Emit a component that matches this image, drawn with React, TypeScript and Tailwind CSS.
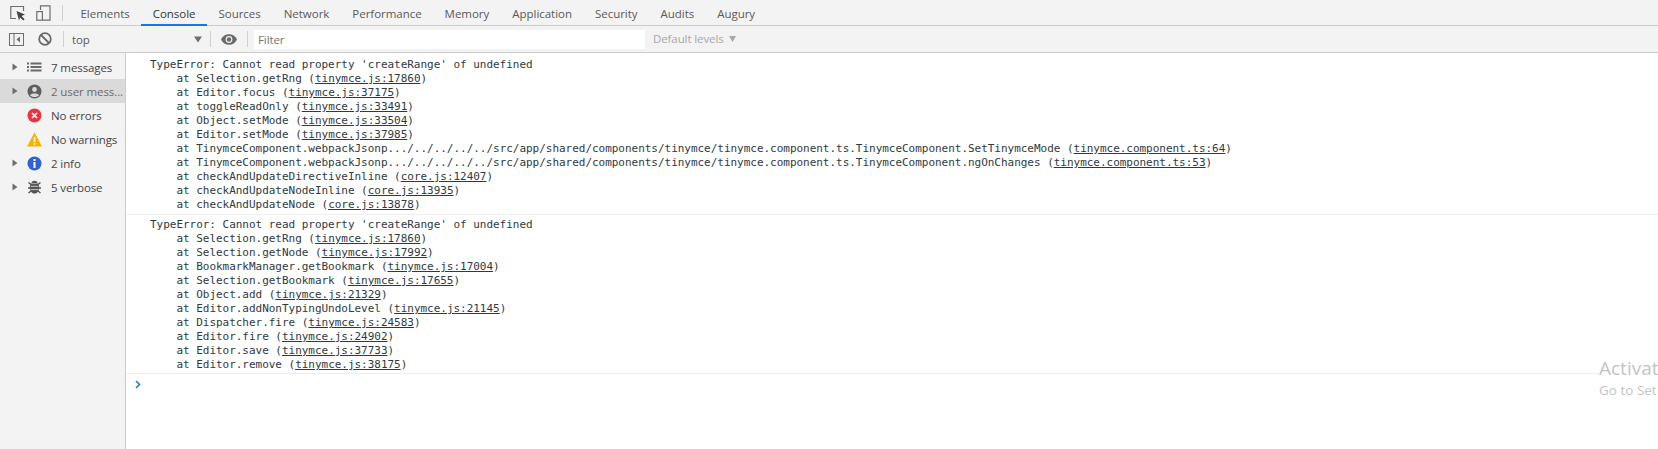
import React from 'react'

const tabs = ['Elements', 'Console', 'Sources', 'Network', 'Performance', 'Memory', 'Application', 'Security', 'Audits', 'Augury']

type Frame = { at: string; file: string }

const firstTrace: Frame[] = [
  { at: 'Selection.getRng', file: 'tinymce.js:17860' },
  { at: 'Editor.focus', file: 'tinymce.js:37175' },
  { at: 'toggleReadOnly', file: 'tinymce.js:33491' },
  { at: 'Object.setMode', file: 'tinymce.js:33504' },
  { at: 'Editor.setMode', file: 'tinymce.js:37985' },
  { at: 'TinymceComponent.webpackJsonp.../../../../../src/app/shared/components/tinymce/tinymce.component.ts.TinymceComponent.SetTinymceMode', file: 'tinymce.component.ts:64' },
  { at: 'TinymceComponent.webpackJsonp.../../../../../src/app/shared/components/tinymce/tinymce.component.ts.TinymceComponent.ngOnChanges', file: 'tinymce.component.ts:53' },
  { at: 'checkAndUpdateDirectiveInline', file: 'core.js:12407' },
  { at: 'checkAndUpdateNodeInline', file: 'core.js:13935' },
  { at: 'checkAndUpdateNode', file: 'core.js:13878' },
]

const secondTrace: Frame[] = [
  { at: 'Selection.getRng', file: 'tinymce.js:17860' },
  { at: 'Selection.getNode', file: 'tinymce.js:17992' },
  { at: 'BookmarkManager.getBookmark', file: 'tinymce.js:17004' },
  { at: 'Selection.getBookmark', file: 'tinymce.js:17655' },
  { at: 'Object.add', file: 'tinymce.js:21329' },
  { at: 'Editor.addNonTypingUndoLevel', file: 'tinymce.js:21145' },
  { at: 'Dispatcher.fire', file: 'tinymce.js:24583' },
  { at: 'Editor.fire', file: 'tinymce.js:24902' },
  { at: 'Editor.save', file: 'tinymce.js:37733' },
  { at: 'Editor.remove', file: 'tinymce.js:38175' },
]

function Separator() {
  return <div className="h-[16px] w-px bg-[#cfcfcf]" />
}

function Arrow() {
  return (
    <svg width="6" height="8" viewBox="0 0 6 8">
      <path d="M0.5 0.5 L5.5 4 L0.5 7.5 Z" fill="#6e6e6e" />
    </svg>
  )
}

function ListIcon() {
  return (
    <svg width="15" height="10" viewBox="0 0 15 10" fill="#6a6a6a">
      <rect x="0" y="0.5" width="2" height="2" />
      <rect x="3.5" y="0.5" width="11" height="2" />
      <rect x="0" y="4" width="2" height="2" />
      <rect x="3.5" y="4" width="11" height="2" />
      <rect x="0" y="7.5" width="2" height="2" />
      <rect x="3.5" y="7.5" width="11" height="2" />
    </svg>
  )
}

function UserIcon() {
  return (
    <svg width="15" height="15" viewBox="0 0 15 15">
      <circle cx="7.5" cy="7.5" r="7" fill="#5f5f5f" />
      <circle cx="7.5" cy="5.5" r="2.4" fill="#dadada" />
      <path d="M3 11.2 C3.8 8.9 11.2 8.9 12 11.2 C11 12.4 9.5 13 7.5 13 C5.5 13 4 12.4 3 11.2 Z" fill="#dadada" />
    </svg>
  )
}

function ErrorIcon() {
  return (
    <svg width="15" height="15" viewBox="0 0 15 15">
      <circle cx="7.5" cy="7.5" r="7" fill="#e8363f" />
      <path d="M5 5 L10 10 M10 5 L5 10" stroke="#fff" strokeWidth="1.6" />
    </svg>
  )
}

function WarningIcon() {
  return (
    <svg width="15" height="15" viewBox="0 0 15 15">
      <path d="M7.5 0.3 L14.9 14.6 L0.1 14.6 Z" fill="#f4b400" />
      <rect x="6.7" y="5" width="1.6" height="5" fill="#fff" />
      <rect x="6.7" y="11" width="1.6" height="1.8" fill="#fff" />
    </svg>
  )
}

function InfoIcon() {
  return (
    <svg width="15" height="15" viewBox="0 0 15 15">
      <circle cx="7.5" cy="7.5" r="7" fill="#2f62d6" />
      <rect x="6.5" y="3" width="2" height="2" fill="#fff" />
      <rect x="6.5" y="6" width="2" height="6" fill="#fff" />
    </svg>
  )
}

function BugIcon() {
  return (
    <svg className="ml-px" width="13" height="14" viewBox="0 0 13 14" fill="#555">
      <path d="M3.5 3 C3.5 0 9.5 0 9.5 3 Z" />
      <path d="M2.6 3.6 L10.4 3.6 C11 5 11.2 6 11.2 8 C11.2 11 9 13.6 6.5 13.6 C4 13.6 1.8 11 1.8 8 C1.8 6 2 5 2.6 3.6 Z" />
      <path d="M0.5 2.5 L3 4.5 M12.5 2.5 L10 4.5 M0 8 L3 8 M13 8 L10 8 M0.5 13 L3 11 M12.5 13 L10 11" stroke="#555" strokeWidth="1.4" />
      <path d="M2.5 6.3 L10.5 6.3 M2.5 9.6 L10.5 9.6" stroke="#f3f3f3" strokeWidth="0.7" />
    </svg>
  )
}

const sideRows = [
  { label: '7 messages', icon: <ListIcon />, arrow: true, selected: false, muted: false },
  { label: '2 user mess...', icon: <UserIcon />, arrow: true, selected: true, muted: true },
  { label: 'No errors', icon: <ErrorIcon />, arrow: false, selected: false, muted: false },
  { label: 'No warnings', icon: <WarningIcon />, arrow: false, selected: false, muted: false },
  { label: '2 info', icon: <InfoIcon />, arrow: true, selected: false, muted: false },
  { label: '5 verbose', icon: <BugIcon />, arrow: true, selected: false, muted: false },
]

function Trace({ frames }: { frames: Frame[] }) {
  return (
    <>
      {frames.map((f) => (
        <div key={f.at + f.file} className="h-[14px] pl-[26.4px] whitespace-pre">
          at {f.at} (<span className="underline">{f.file}</span>)
        </div>
      ))}
    </>
  )
}

export default function App() {
  return (
    <div className="relative flex h-[449px] w-full flex-col overflow-hidden bg-white font-['Open_Sans',sans-serif] text-[11.5px] tracking-[-0.1px] text-[#333]">
      {/* tab strip */}
      <div className="flex h-[26px] shrink-0 items-stretch border-b border-[#cccccc] bg-[#f3f3f3]">
        <div className="flex w-[69px] items-center pl-[10px]">
          <svg width="16" height="16" viewBox="0 0 16 16" fill="none">
            <path d="M6 13.5 L0.8 13.5 L0.8 1.5 L13.5 1.5 L13.5 6" stroke="#6e6e6e" strokeWidth="1.2" />
            <path d="M6.5 6 L15 9.5 L11.6 11 L14.6 14.2 L13.2 15.6 L10.2 12.4 L9 15.5 Z" fill="#444" />
          </svg>
          <svg className="ml-[10px]" width="15" height="16" viewBox="0 0 15 16" fill="none">
            <path d="M4.5 5 L4.5 0.8 L14 0.8 L14 15.2 L7 15.2" stroke="#6e6e6e" strokeWidth="1.2" />
            <rect x="0.8" y="6.6" width="5.6" height="8.6" stroke="#6e6e6e" strokeWidth="1.2" />
          </svg>
          <div className="ml-[11px] h-[16px] w-px bg-[#cfcfcf]" />
        </div>
        <div className="flex items-stretch tracking-[-0.03px]">
          {tabs.map((t) => (
            <div
              key={t}
              className={
                t === 'Console'
                  ? 'relative flex items-center px-[11.5px] pt-[2px] text-[#333] after:absolute after:inset-x-0 after:bottom-[-1px] after:h-[2px] after:bg-[#1a73e8]'
                  : 'flex items-center px-[11.5px] pt-[2px] text-[#5a5a5a]'
              }
            >
              {t}
            </div>
          ))}
        </div>
      </div>

      {/* console toolbar */}
      <div className="flex h-[27px] shrink-0 items-center border-b border-[#cccccc] bg-[#f3f3f3]">
        <svg className="ml-[9px]" width="15" height="13" viewBox="0 0 15 13" fill="none">
          <rect x="0.5" y="0.5" width="14" height="12" stroke="#6e6e6e" />
          <rect x="4.5" y="0.5" width="1" height="12" fill="#6e6e6e" />
          <path d="M11 3.5 L7.5 6.5 L11 9.5 Z" fill="#6e6e6e" />
        </svg>
        <svg className="ml-[14px]" width="14" height="14" viewBox="0 0 14 14" fill="none">
          <circle cx="7" cy="7" r="5.8" stroke="#6a6a6a" strokeWidth="1.8" />
          <path d="M3 3 L11 11" stroke="#6a6a6a" strokeWidth="1.8" />
        </svg>
        <div className="ml-[11px]">
          <Separator />
        </div>
        <div className="flex w-[146px] items-center justify-between pl-[8px] pr-[8px] text-[#5a5a5a]">
          <span className="pt-[2px]">top</span>
          <svg width="8" height="7" viewBox="0 0 8 7">
            <path d="M0 0.5 L8 0.5 L4 6.5 Z" fill="#6e6e6e" />
          </svg>
        </div>
        <Separator />
        <svg className="ml-[10px]" width="16" height="11" viewBox="0 0 16 11">
          <path d="M0 5.5 C3 -1.5 13 -1.5 16 5.5 C13 12.5 3 12.5 0 5.5 Z" fill="#6a6a6a" />
          <circle cx="8" cy="5.5" r="3.4" fill="#f3f3f3" />
          <circle cx="8" cy="5.5" r="2.2" fill="#6a6a6a" />
        </svg>
        <div className="ml-[10px]">
          <Separator />
        </div>
        <div className="ml-[6px] flex h-[19px] w-[391px] items-center bg-white pl-[4px] pt-[1px] text-[#757575]">Filter</div>
        <div className="ml-[8px] flex items-center gap-[5px] text-[#a8a8a8]">
          <span>Default levels</span>
          <svg width="7" height="6" viewBox="0 0 7 6">
            <path d="M0 0 L7 0 L3.5 6 Z" fill="#a8a8a8" />
          </svg>
        </div>
      </div>

      <div className="flex min-h-0 flex-1">
        {/* sidebar */}
        <div className="w-[126px] shrink-0 border-r border-[#cccccc] bg-[#f3f3f3] pt-[2px]">
          {sideRows.map((r) => (
            <div key={r.label} className={r.selected ? 'flex h-[24px] items-center bg-[#dadada]' : 'flex h-[24px] items-center'}>
              <div className="flex w-[27px] shrink-0 justify-start pl-[12px]">{r.arrow && <Arrow />}</div>
              <div className="flex w-[24px] shrink-0 justify-start">{r.icon}</div>
              <span className={r.muted ? 'whitespace-nowrap pt-[2px] text-[#6a6a6a]' : 'whitespace-nowrap pt-[2px] text-[#444]'}>{r.label}</span>
            </div>
          ))}
        </div>

        {/* console output */}
        <div className="min-w-0 flex-1 font-['DejaVu_Sans_Mono',monospace] text-[11px] leading-[14px] tracking-[-0.026px] text-[#303942]">
          <div className="border-b border-[#f0f0f0] pb-[2px] pl-[24px] pt-[5px]">
            <div className="h-[14px] whitespace-pre">TypeError: Cannot read property 'createRange' of undefined</div>
            <Trace frames={firstTrace} />
          </div>
          <div className="border-b border-[#f0f0f0] pb-[1px] pl-[24px] pt-[3px]">
            <div className="h-[14px] whitespace-pre">TypeError: Cannot read property 'createRange' of undefined</div>
            <Trace frames={secondTrace} />
          </div>
          <div className="pl-[9px] pt-[6px]">
            <svg width="6" height="9" viewBox="0 0 6 9" fill="none">
              <path d="M1 1 L4.5 4.5 L1 8" stroke="#2f6fe0" strokeWidth="1.6" />
            </svg>
          </div>
        </div>
      </div>

      {/* windows activation watermark, cut by the window edge in the reference */}
      <div className="absolute left-[1599px] top-[356px] w-[59px] bg-white font-['Open_Sans',sans-serif] tracking-normal text-[#c4c4c4]">
        <div className="whitespace-nowrap text-[19px] leading-[24px]">Activat</div>
        <div className="whitespace-nowrap text-[13.5px] leading-[20px]">Go to Set</div>
      </div>
    </div>
  )
}
